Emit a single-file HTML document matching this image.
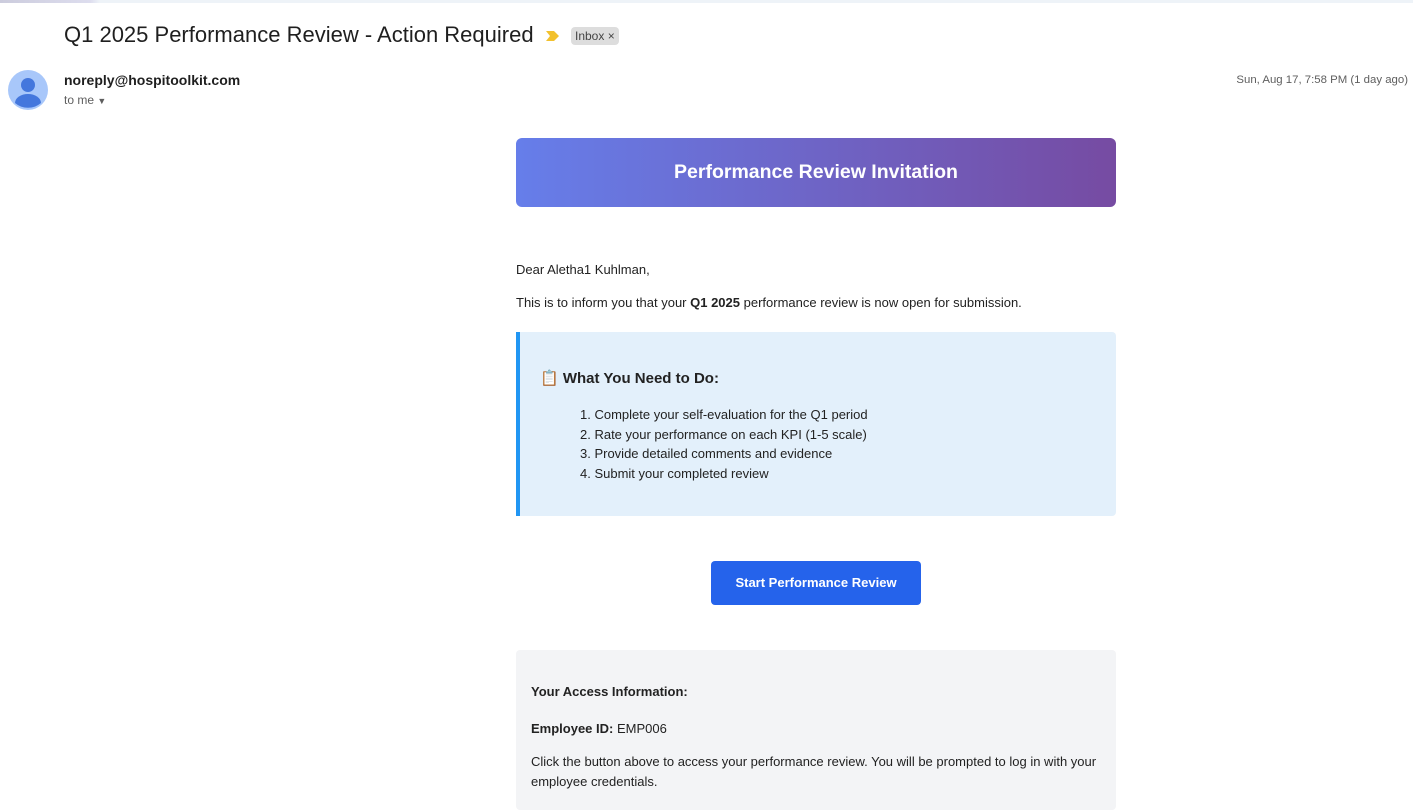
<!DOCTYPE html>
<html><head><meta charset="utf-8"><style>
*{margin:0;padding:0;box-sizing:border-box}
body{width:1413px;height:794px;overflow:hidden;background:#fff;font-family:"Liberation Sans",Arial,sans-serif;color:#222;position:relative}
.abs{position:absolute}
.topbar{left:0;top:0;width:1413px;height:3px;background:linear-gradient(90deg,#ccd 0,#dde 90px,#eef3f8 100px,#eef3f8 100%)}
.title{left:64px;top:22px;font-size:22px;color:#1f1f1f;white-space:nowrap}
.inbox{left:571px;top:27px;background:#ddd;border-radius:4px;font-size:12px;color:#444;padding:1px 4px;height:18px;line-height:16px}
.p{font-size:13px;color:#222;white-space:nowrap}
li{height:19.5px;font-size:13px}
</style></head><body>
<div class="abs topbar"></div>
<div class="abs title">Q1 2025 Performance Review - Action Required</div>
<svg class="abs" style="left:546px;top:30px" width="14" height="12"><path d="M0 1h8l5 5-5 5H0l4-5z" fill="#f2c12e"/></svg>
<div class="abs inbox">Inbox ×</div>
<svg class="abs" style="left:8px;top:70px" width="40" height="40"><circle cx="20" cy="20" r="20" fill="#a8c7fa"/><circle cx="20" cy="15" r="7" fill="#4477dd"/><path d="M7 33a13 9 0 0 1 26 0a20 20 0 0 1-26 0z" fill="#4477dd"/></svg>
<div class="abs" style="left:64px;top:72px;font-size:14px;font-weight:bold;color:#1f1f1f">noreply@hospitoolkit.com</div>
<div class="abs" style="left:64px;top:93px;font-size:12px;color:#5e5e5e">to me <span style="font-size:9px">▼</span></div>
<div class="abs" style="right:5px;top:74px;font-size:11.4px;color:#5e5e5e">Sun, Aug 17, 7:58 PM (1 day ago)</div>

<div class="abs" style="left:516px;top:138px;width:600px;height:69px;border-radius:6px;background:linear-gradient(90deg,#667eea,#764ba2);color:#fff;font-size:19.5px;font-weight:bold;text-align:center;line-height:69px">Performance Review Invitation</div>
<div class="abs p" style="left:516px;top:262px">Dear Aletha1 Kuhlman,</div>
<div class="abs p" style="left:516px;top:295px">This is to inform you that your <b>Q1 2025</b> performance review is now open for submission.</div>
<div class="abs" style="left:516px;top:332px;width:600px;height:184px;background:#e3f0fb;border-left:4px solid #2196f3;border-radius:0 4px 4px 0"></div>
<div class="abs" style="left:540px;top:369px;font-size:15px;font-weight:bold;color:#222">📋 What You Need to Do:</div>
<ol class="abs p" style="left:580px;top:407px;list-style:none">
<li>1. Complete your self-evaluation for the Q1 period</li>
<li>2. Rate your performance on each KPI (1-5 scale)</li>
<li>3. Provide detailed comments and evidence</li>
<li>4. Submit your completed review</li>
</ol>
<div class="abs" style="left:711px;top:561px;width:210px;height:44px;background:#2563eb;border-radius:4px;color:#fff;font-size:13px;font-weight:bold;text-align:center;line-height:44px">Start Performance Review</div>
<div class="abs" style="left:516px;top:650px;width:600px;height:160px;background:#f3f4f6;border-radius:4px"></div>
<div class="abs p" style="left:531px;top:684px;font-weight:bold">Your Access Information:</div>
<div class="abs p" style="left:531px;top:721px"><b>Employee ID:</b> EMP006</div>
<div class="abs" style="left:531px;top:752px;width:575px;line-height:20px;font-size:13px">Click the button above to access your performance review. You will be prompted to log in with your employee credentials.</div>
</body></html>
